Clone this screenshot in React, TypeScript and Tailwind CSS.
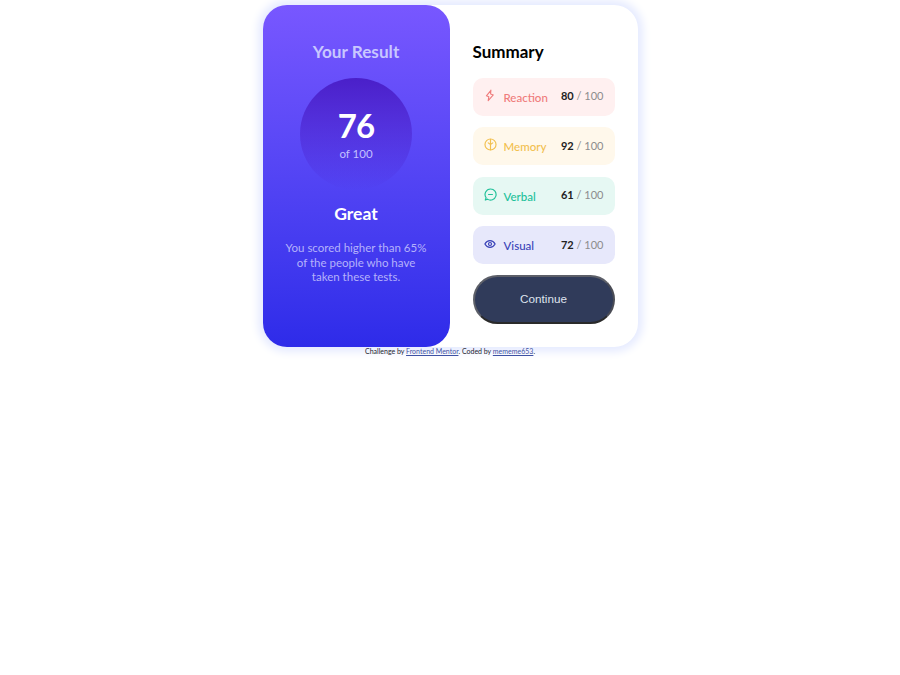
import React from 'react';

const FONT = "font-['Lato','Liberation_Sans',sans-serif]";

// stroke icons, drawn on the original 20 unit grid
const ReactionIcon = () => (
    <svg width="12" height="13" viewBox="0 0 20 20" fill="none" stroke="currentColor" strokeWidth="1.8" strokeLinejoin="round">
        <path d="M11.5 1.5 4 10.500l4 1.500-1 6.500 8.500-9.500-4.500-1.500.500-6.500Z" />
    </svg>
);

const MemoryIcon = () => (
    <svg width="13" height="13" viewBox="0 0 20 20" fill="none" stroke="currentColor" strokeWidth="1.800" strokeLinecap="round">
        <circle cx="10" cy="10" r="8.500" />
        <path d="M10 2v16M6.500 7.500 10 10l3.500-2.500" />
    </svg>
);

const VerbalIcon = () => (
    <svg width="13" height="13" viewBox="0 0 20 20" fill="none" stroke="currentColor" strokeWidth="1.800" strokeLinecap="round" strokeLinejoin="round">
        <path d="M10 1.500a8.500 8.500 0 1 1-4.600 15.600L2 18.500l1.200-3.600A8.500 8.500 0 0 1 10 1.500Z" />
        <path d="M7 10h6" />
    </svg>
);

const VisualIcon = () => (
    <svg width="12" height="12" viewBox="0 0 20 20" fill="none" stroke="currentColor" strokeWidth="2">
        <path d="M1.500 10C3.500 6.300 6.500 4.500 10 4.500s6.500 1.800 8.500 5.500c-2 3.700-5 5.500-8.500 5.500S3.500 13.700 1.500 10Z" />
        <circle cx="10" cy="10" r="2.500" />
    </svg>
);

const rows = [
    { label: 'Reaction', score: 80, icon: <ReactionIcon />, box: 'bg-[#fff0f0]', text: 'text-[#ef7b7b]' },
    { label: 'Memory', score: 92, icon: <MemoryIcon />, box: 'bg-[#fff8eb]', text: 'text-[#f2c04f]' },
    { label: 'Verbal', score: 61, icon: <VerbalIcon />, box: 'bg-[#e6f8f3]', text: 'text-[#22c19a]' },
    { label: 'Visual', score: 72, icon: <VisualIcon />, box: 'bg-[#e7e8fb]', text: 'text-[#3a43b8]' },
];

export default function App() {
    return (
        <div className={`min-h-[675px] bg-white flex flex-col items-center pt-[5px] ${FONT}`}>
            <main className="w-[375px] h-[342px] flex rounded-[24px] bg-white shadow-[0_0_8px_5px_#e6ebff]">
                {/* Result */}
                <section className="w-[187px] rounded-[24px] bg-gradient-to-b from-[#7857ff] to-[#2e2be9] flex flex-col items-center pt-[36px]">
                    <h1 className="text-[17.200px] leading-[22px] font-bold text-[#c8c7ff]">Your Result</h1>
                    <div className="mt-[15px] w-[112px] h-[112px] rounded-full bg-gradient-to-b from-[#4a1fc9] to-[#4a2de800] flex flex-col items-center pt-[27px]">
                        <span className="text-[33px] leading-[41px] font-bold tracking-[-1px] text-white">76</span>
                        <span className="text-[11.500px] leading-[14px] mt-[1px] text-[#c3c0ff]">of 100</span>
                    </div>
                    <h2 className="mt-[14px] text-[17.500px] leading-[20px] font-bold text-white">Great</h2>
                    <p className="mt-[17px] w-[145px] text-center text-[11.500px] leading-[14.500px] text-[#b5b2fb]">
                        You scored higher than 65% of the people who have taken these tests.
                    </p>
                </section>

                {/* Summary */}
                <section className="flex-1 px-[23px] pt-[36px]">
                    <h2 className="text-[17px] leading-[22px] font-bold text-black">Summary</h2>
                    <ul className="mt-[14.500px] flex flex-col gap-[11.500px]">
                        {rows.map((row) => (
                            <li key={row.label} className={`h-[38px] rounded-[10px] flex items-center px-[11px] ${row.box}`}>
                                <span className={`w-[13px] mb-[3px] flex justify-center ${row.text}`}>{row.icon}</span>
                                <span className={`ml-[7px] mt-[2px] text-[11.500px] font-medium ${row.text}`}>{row.label}</span>
                                <span className="ml-auto text-[11px] text-[#8c8c8c]">
                                    <span className="font-bold text-[#222222]">{row.score}</span> / 100
                                </span>
                            </li>
                        ))}
                    </ul>
                    <button className="mt-[10.500px] w-[142px] h-[49px] rounded-full bg-[#303b5a] border-2 border-[#5c5f68] border-b-[#2a2a2a] border-r-[#4a4c55] text-[#dfe3ee] text-[11.700px] font-['Liberation_Sans',sans-serif]">
                        Continue
                    </button>
                </section>
            </main>
            <footer className="text-[7px] leading-[8px] text-[#1c1c2e]">
                Challenge by <a href="#" className="underline text-[#3e52a3]">Frontend Mentor</a>. Coded by <a href="#" className="underline text-[#3e52a3]">mememe653</a>.
            </footer>
        </div>
    );
}
